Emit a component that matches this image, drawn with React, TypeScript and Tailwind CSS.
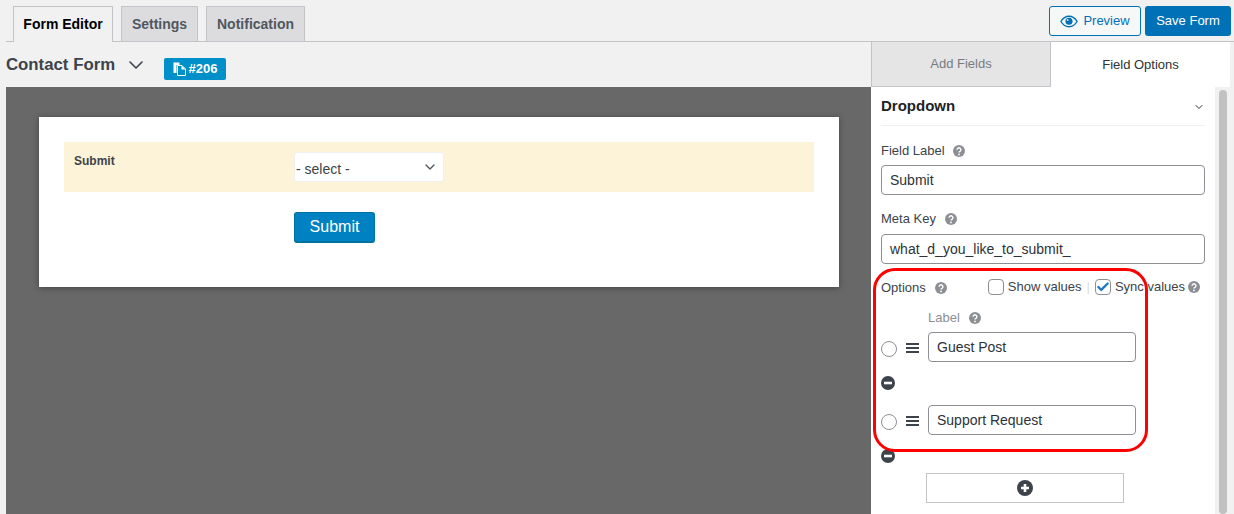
import { ChevronDown, Check } from 'lucide-react';

function HelpIcon() {
  return (
    <svg viewBox="0 0 12 12" className="h-[12px] w-[12px] shrink-0">
      <circle cx="6" cy="6" r="6" fill="#8c8f94" />
      <path d="M4.1 4.7a1.9 1.9 0 1 1 2.9 1.6c-.7.4-1 .7-1 1.2" fill="none" stroke="#fff" strokeWidth="1.4" />
      <circle cx="6" cy="9.4" r=".9" fill="#fff" />
    </svg>
  );
}

function DragIcon() {
  return (
    <div className="flex w-[13px] flex-col gap-[2px]">
      <div className="h-[2px] bg-[#3c434a]" />
      <div className="h-[2px] bg-[#3c434a]" />
      <div className="h-[2px] bg-[#3c434a]" />
    </div>
  );
}

function MinusCircle() {
  return (
    <svg viewBox="0 0 14 14" className="h-[14px] w-[14px]">
      <circle cx="7" cy="7" r="7" fill="#3c434a" />
      <rect x="3" y="5.7" width="8" height="2.6" fill="#fff" />
    </svg>
  );
}

function OptionRow({ value }: { value: string }) {
  return (
    <div className="flex items-center">
      <div className="mt-[4px] h-[16px] w-[16px] rounded-full border border-[#8c8f94] bg-white" />
      <div className="ml-[9px] mt-[2px]">
        <DragIcon />
      </div>
      <div className="ml-[9px] flex h-[30px] w-[208px] items-center rounded border border-[#8c8f94] bg-white px-[8px] text-[14px] text-[#2c3338]">
        {value}
      </div>
    </div>
  );
}

export default function App() {
  return (
    <div className="relative h-[514px] w-[1234px] overflow-hidden bg-[#f1f1f1] pl-[6px] font-['Liberation_Sans',Arial,sans-serif]">
      {/* barra superior */}
      <div className="flex h-[42px] items-start justify-between border-b border-[#c3c4c7] pl-[7px] pr-[3px]">
        <div className="flex gap-[8px] pt-[6px]">
          <div className="flex h-[36px] w-[100px] items-center justify-center border border-b-0 border-[#c3c4c7] bg-[#f1f1f1] text-[14px] font-bold text-black">
            Form Editor
          </div>
          <div className="flex h-[35px] w-[77px] items-center justify-center border border-b-0 border-[#c3c4c7] bg-[#dcdcde] text-[14px] font-bold text-[#50575e]">
            Settings
          </div>
          <div className="flex h-[35px] w-[99px] items-center justify-center border border-b-0 border-[#c3c4c7] bg-[#dcdcde] text-[14px] font-bold text-[#50575e]">
            Notification
          </div>
        </div>
        <div className="flex gap-[4px] pt-[6px]">
          <div className="flex h-[30px] w-[92px] items-center justify-center gap-[5px] rounded-[3px] border border-[#0071b7] bg-[#f6f7f7] text-[13px] text-[#0071b7]">
            <svg viewBox="0 0 20 14" className="h-[13px] w-[18px]">
              <path d="M1 7c2.2-3.6 5.3-5.8 9-5.8s6.8 2.2 9 5.8c-2.2 3.6-5.3 5.8-9 5.8S3.200 10.600 1 7z" fill="none" stroke="#0071b7" strokeWidth="1.5" />
              <circle cx="10" cy="6.800" r="3.900" fill="#0071b7" />
              <circle cx="8.500" cy="5.300" r="1" fill="#f6f7f7" />
            </svg>
            Preview
          </div>
          <div className="flex h-[30px] w-[86px] items-center justify-center rounded-[3px] bg-[#0071b7] text-[13px] text-white">
            Save Form
          </div>
        </div>
      </div>

      <div className="flex">
        {/* zona del formulario */}
        <div className="w-[865px]">
          <div className="flex h-[45px] items-center">
            <span className="text-[16.8px] font-bold text-[#3c434a]">Contact Form</span>
            <ChevronDown className="ml-[9px] h-[24px] w-[24px] text-[#3c434a]" strokeWidth={1.6} />
            <div className="ml-[16px] mt-[9px] flex h-[22px] w-[62px] items-center justify-center gap-[3px] rounded-[2px] bg-[#0090c9] text-[13px] font-bold text-white">
              <svg viewBox="0 0 13 14" className="h-[14px] w-[13px]">
                <path d="M0.500 0.500h6v2.500h-3v8h-3z" fill="#fff" />
                <path d="M4.500 3.500h4.500l3.500 3.500v6.500h-8z" fill="#0090c9" stroke="#fff" strokeWidth="1" />
                <path d="M8.500 3.500v4h4z" fill="#fff" />
              </svg>
              #206
            </div>
          </div>
          <div className="h-[427px] bg-[#686868] pl-[33px] pt-[30px]">
            <div className="h-[170px] w-[800px] bg-white px-[25px] pt-[25px] shadow-[0_1px_6px_rgba(0,0,0,0.35)]">
              <div className="flex h-[50px] bg-[#fdf3d8] pl-[10px]">
                <div className="w-[220px] pt-[10px] text-[12px] font-bold text-[#3c434a]">Submit</div>
                <div className="mt-[10px] flex h-[30px] w-[150px] items-center justify-between rounded-[3px] border border-[#f0f0f1] bg-white pl-[1px] pr-[5px] text-[14px] text-[#3c434a]">
                  <span className="pt-[4px]">- select -</span>
                  <ChevronDown className="h-[16px] w-[16px] text-[#50575e]" />
                </div>
              </div>
              <div className="ml-[230px] mt-[20px] flex h-[31px] w-[81px] items-center justify-center rounded-[3px] border border-[#0071a1] border-b-2 bg-[#0081c1] text-[16px] text-white">
                Submit
              </div>
            </div>
          </div>
        </div>

        {/* panel lateral */}
        <div className="h-[472px] w-[359px] bg-white">
          <div className="flex h-[45px] text-[13px]">
            <div className="flex w-[180px] items-center justify-center border-b border-l border-r border-[#c3c4c7] bg-[#e5e5e5] text-[#787c82]">
              Add Fields
            </div>
            <div className="flex w-[179px] items-center justify-center text-[#2c3338]">Field Options</div>
          </div>
          <div className="flex h-[427px]">
            <div className="w-[344px] pl-[10px] pr-[10px]">
              <div className="flex h-[39px] items-center justify-between border-b border-[#f0f0f1] pt-[1px]">
                <span className="text-[15px] font-bold text-[#1d2327]">Dropdown</span>
                <ChevronDown className="h-[12px] w-[12px] text-[#2c3338]" />
              </div>
              <div className="mt-[17px] flex items-center gap-[8px] text-[13px] leading-[16px] text-[#3c434a]">
                Field Label <HelpIcon />
              </div>
              <div className="mt-[6px] flex h-[30px] items-center rounded border border-[#8c8f94] px-[8px] text-[14px] text-[#2c3338]">
                Submit
              </div>
              <div className="mt-[16px] flex items-center gap-[9px] text-[13px] leading-[16px] text-[#3c434a]">
                Meta Key <HelpIcon />
              </div>
              <div className="mt-[7px] flex h-[30px] items-center rounded border border-[#8c8f94] px-[8px] text-[14px] text-[#2c3338]">
                what_d_you_like_to_submit_
              </div>
              <div className="mt-[14px] flex h-[18px] items-center text-[13px] text-[#3c434a]">
                <span className="mt-[2px]">Options</span>
                <span className="ml-[9px] mt-[2px]"><HelpIcon /></span>
                <div className="ml-[41px] h-[16px] w-[16px] rounded-[4px] border border-[#8c8f94] bg-white" />
                <span className="ml-[4px]">Show values</span>
                <span className="ml-[5px] text-[#dcdcde]">|</span>
                <div className="ml-[5px] flex h-[16px] w-[16px] items-center justify-center rounded-[4px] border border-[#8c8f94] bg-white">
                  <Check className="h-[14px] w-[14px] text-[#1e79c2]" strokeWidth={4} />
                </div>
                <span className="ml-[4px]">Sync values</span>
                <span className="ml-[3px]"><HelpIcon /></span>
              </div>
              <div className="ml-[47px] mt-[15px] flex items-center gap-[9px] text-[13px] leading-[14px] text-[#8c8f94]">
                Label <HelpIcon />
              </div>
              <div className="mt-[7px]"><OptionRow value="Guest Post" /></div>
              <div className="mt-[14px]"><MinusCircle /></div>
              <div className="mt-[15px]"><OptionRow value="Support Request" /></div>
              <div className="mt-[14px]"><MinusCircle /></div>
              <div className="ml-[45px] mt-[10px] flex h-[30px] w-[198px] items-center justify-center border border-[#c3c4c7]">
                <svg viewBox="0 0 16 16" className="h-[16px] w-[16px]">
                  <circle cx="8" cy="8" r="8" fill="#3c434a" />
                  <path d="M8 4v8M4 8h8" stroke="#fff" strokeWidth="2.6" />
                </svg>
              </div>
            </div>
            <div className="w-[15px] bg-[#f1f1f1] pl-[4px] pr-[3px] pt-[3px]">
              <div className="h-full rounded-full bg-[#c1c1c1]" />
            </div>
          </div>
        </div>
      </div>

      {/* recuadro rojo de la captura */}
      <div className="absolute left-[873px] top-[268px] h-[184px] w-[275px] rounded-[22px] border-[3px] border-[#fe0000]" />
    </div>
  );
}
